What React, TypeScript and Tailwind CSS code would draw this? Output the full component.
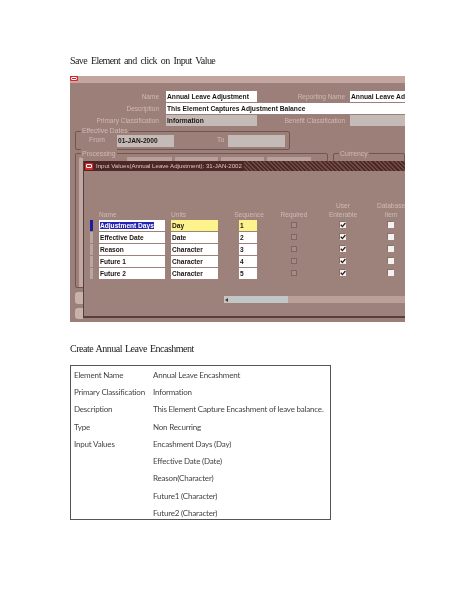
const sans = "font-['Liberation_Sans',Arial,sans-serif]";

function Field({ text, w, tone = "white" }: { text?: string; w: string; tone?: "white" | "gray" }) {
  const bg = tone === "white" ? "bg-white" : "bg-[#c4bbb8]";
  return (
    <div className={`${w} ${bg} h-[11px] shrink-0 overflow-hidden whitespace-nowrap pl-[1px] text-[6.7px] leading-[11px] font-bold text-[#1c1412]`}>
      {text}
    </div>
  );
}

function FormRow({ label, children }: { label: string; children: React.ReactNode }) {
  return (
    <div className="flex h-[11px] items-center">
      <div className="w-[90px] shrink-0 pr-[1px] text-right text-[6.5px] text-[#cfbab4]">{label}</div>
      <div className="ml-[6px] flex items-center">{children}</div>
    </div>
  );
}

function Check({ kind }: { kind: "off" | "on" | "empty" }) {
  if (kind === "off") {
    return <div className="mx-auto mt-[2px] h-[6px] w-[6px] border border-[#7f6761] bg-[#a58b85]" />;
  }
  return (
    <div className="relative mx-auto mt-[2px] h-[6px] w-[6px] bg-[#f4f1f0] shadow-[-1px_-1px_0_#85706a]">
      {kind === "on" ? (
        <svg viewBox="0 0 6 6" className="absolute inset-0 h-[6px] w-[6px]" aria-hidden>
          <path d="M0.8 2.8 L2.4 4.6 L5.4 1" stroke="#2a1c1a" strokeWidth="1.3" fill="none" />
        </svg>
      ) : null}
    </div>
  );
}

function RedIcon({ className }: { className: string }) {
  return (
    <div className={`${className} flex shrink-0 items-center justify-center bg-[#d8242a]`}>
      <div className="h-[50%] w-[70%] rounded-[1px] border border-white" />
    </div>
  );
}

const rows = [
  { name: "Adjustment Days", units: "Day", seq: "1" },
  { name: "Effective Date", units: "Date", seq: "2" },
  { name: "Reason", units: "Character", seq: "3" },
  { name: "Future 1", units: "Character", seq: "4" },
  { name: "Future 2", units: "Character", seq: "5" },
];

function InputValues() {
  return (
    <div className="absolute top-[85px] right-0 bottom-[4px] left-[13px] overflow-hidden border-b-2 border-l border-[#55403b] bg-[#9d827b]">
      <div className="flex h-[10px] items-center bg-[repeating-linear-gradient(45deg,#4c2723_0px,#4c2723_1.5px,#6d4a44_1.5px,#6d4a44_3px)]">
        <div className="flex h-[10px] w-[160px] shrink-0 items-center bg-[#4c2723]">
          <RedIcon className="mr-[3px] ml-[1px] h-[7px] w-[8px]" />
          <span className="whitespace-nowrap text-[6.1px] text-[#d9c9c4]">Input Values(Annual Leave Adjustment): 31-JAN-2002</span>
        </div>
      </div>
      <div className="ml-[6px] w-[340px]">
        <div className="grid grid-cols-[9px_72px_58px_40px_50px_48px_48px] pt-[30px] text-[6.6px] leading-[9px] text-[#cfbab4]">
          <div />
          <div className="self-end">Name</div>
          <div className="self-end">Units</div>
          <div className="self-end text-center">Sequence</div>
          <div className="self-end text-center">Required</div>
          <div className="text-center">
            User
            <br />
            Enterable
          </div>
          <div className="text-center">
            Database
            <br />
            Item
          </div>
        </div>
        <div className="mt-[1px] flex flex-col gap-[1px]">
          {rows.map((r, i) => (
            <div key={r.seq} className="grid h-[11px] grid-cols-[9px_72px_58px_40px_50px_48px_48px]">
              <div className={`w-[3px] ${i === 0 ? "bg-[#1c1c9c]" : "bg-[#b8a6a1]"}`} />
              <div className="h-[11px] w-[66px] overflow-hidden whitespace-nowrap bg-white pl-[1px] text-[6.6px] leading-[11px] font-bold text-[#1c1412]">
                {i === 0 ? <span className="bg-[#2424b8] text-white">{r.name}</span> : r.name}
              </div>
              <div className={`h-[11px] w-[47px] pl-[1px] text-[6.6px] leading-[11px] font-bold text-[#1c1412] ${i === 0 ? "bg-[#fdf38c]" : "bg-white"}`}>
                {r.units}
              </div>
              <div className={`ml-[10px] h-[11px] w-[18px] pl-[1px] text-[6.6px] leading-[11px] font-bold text-[#1c1412] ${i === 0 ? "bg-[#fdf38c]" : "bg-white"}`}>
                {r.seq}
              </div>
              <Check kind="off" />
              <Check kind="on" />
              <Check kind="empty" />
            </div>
          ))}
        </div>
      </div>
      <div className="mt-[17px] ml-[140px] flex h-[7px] bg-[#bc9f99]">
        <div className="flex w-[5px] items-center justify-center bg-[#c9c4c2]">
          <div className="h-0 w-0 border-y-[2px] border-r-[3px] border-y-transparent border-r-[#3c3c3c]" />
        </div>
        <div className="w-[59px] bg-[#c2c6c7]" />
      </div>
    </div>
  );
}

function OracleWindow() {
  return (
    <div className={`relative h-[246px] w-[335px] overflow-hidden bg-[#9c7f78] ${sans}`}>
      <div className="flex h-[7px] bg-[#c4a6a0]">
        <RedIcon className="h-[5px] w-[8px] rounded-b-[1px]" />
      </div>
      <div className="flex flex-col gap-[1px] pt-[8px]">
        <FormRow label="Name">
          <Field text="Annual Leave Adjustment" w="w-[91px]" />
          <div className="w-[88px] shrink-0 text-right text-[6.5px] text-[#cfbab4]">Reporting Name</div>
          <div className="w-[5px] shrink-0" />
          <Field text="Annual Leave Adjustment" w="w-[60px]" />
        </FormRow>
        <FormRow label="Description">
          <Field text="This Element Captures Adjustment Balance" w="w-[240px]" />
        </FormRow>
        <FormRow label="Primary Classification">
          <Field text="Information" w="w-[91px]" tone="gray" />
          <div className="w-[88px] shrink-0 text-right text-[6.5px] text-[#cfbab4]">Benefit Classification</div>
          <div className="w-[5px] shrink-0" />
          <Field w="w-[60px]" tone="gray" />
        </FormRow>
      </div>

      <div className="relative mt-[5px] ml-[5px] flex h-[19px] w-[215px] items-center rounded-[2px] border border-[#6f5650] text-[6.8px] text-[#cfbab4]">
        <span className="absolute -top-[6px] left-[5px] bg-[#9c7f78] px-[1px] leading-[9px]">Effective Dates</span>
        <span className="ml-[13px] w-[28px]">From</span>
        <div className="h-[12px] w-[57px] bg-[#c4bbb8] pl-[1px] text-[6.6px] leading-[12px] font-bold text-[#1c1412]">01-JAN-2000</div>
        <span className="ml-[43px] w-[11px]">To</span>
        <div className="h-[12px] w-[57px] bg-[#c4bbb8]" />
      </div>

      <div className="mt-[3px] flex">
        <div className="relative ml-[5px] h-[135px] w-[253px] rounded-[2px] border border-[#6f5650] text-[6.8px] text-[#cfbab4]">
          <span className="absolute -top-[5px] left-[5px] bg-[#9c7f78] px-[1px] leading-[9px]">Processing</span>
          <div className="flex items-start">
            <div className="mt-[3px] ml-[3px] h-[130px] w-[4px] shrink-0 rounded-tl-[2px] bg-[#c0a9a3]" />
            <div className="mt-[3px] ml-[44px] flex gap-[3px]">
              <div className="h-[5px] w-[45px] bg-[#b89f99]" />
              <div className="h-[5px] w-[43px] bg-[#b89f99]" />
              <div className="h-[5px] w-[43px] bg-[#b89f99]" />
              <div className="h-[5px] w-[44px] bg-[#b89f99]" />
            </div>
          </div>
        </div>
        <div className="relative ml-[5px] h-[20px] flex-1 rounded-[2px] border border-[#6f5650] text-[6.8px] text-[#cfbab4]">
          <span className="absolute -top-[5px] left-[5px] bg-[#9c7f78] px-[1px] leading-[9px]">Currency</span>
        </div>
      </div>

      <div className="mt-[4px] ml-[5px] flex w-[8px] flex-col gap-[4px]">
        <div className="h-[12px] rounded-l-[3px] bg-[#c7b2ac]" />
        <div className="h-[11px] rounded-l-[3px] bg-[#c7b2ac]" />
      </div>

      <InputValues />
    </div>
  );
}

const spec: [string, string][] = [
  ["Element Name", "Annual Leave Encashment"],
  ["Primary Classification", "Information"],
  ["Description", "This Element Capture Encashment of leave balance."],
  ["Type", "Non Recurring"],
  ["Input Values", "Encashment Days (Day)"],
  ["", "Effective Date (Date)"],
  ["", "Reason(Character)"],
  ["", "Future1 (Character)"],
  ["", "Future2 (Character)"],
];

export default function App() {
  return (
    <div className="h-[612px] w-[474px] overflow-hidden bg-white pt-[54px] pl-[70px] blur-[0.35px]">
      <div className="h-[14px] font-['Liberation_Serif',serif] text-[10px] leading-[14px] tracking-[-0.6px] [word-spacing:2px] text-[#222]">
        Save Element and click on Input Value
      </div>
      <div className="mt-[8px]">
        <OracleWindow />
      </div>
      <div className="mt-[20px] h-[14px] font-['Liberation_Serif',serif] text-[10px] leading-[14px] tracking-[-0.5px] [word-spacing:1px] text-[#222]">
        Create Annual Leave Encashment
      </div>
      <div className="mt-[9px] flex h-[155px] w-[261px] flex-col border border-[#555] pl-[3px] font-['Lato',sans-serif] text-[8px] tracking-[-0.2px] text-[#444]">
        {spec.map(([k, v], i) => (
          <div key={i} className="flex h-[17.3px] shrink-0 items-center whitespace-nowrap">
            <div className="w-[79px] shrink-0">{k}</div>
            <div>{v}</div>
          </div>
        ))}
      </div>
    </div>
  );
}
